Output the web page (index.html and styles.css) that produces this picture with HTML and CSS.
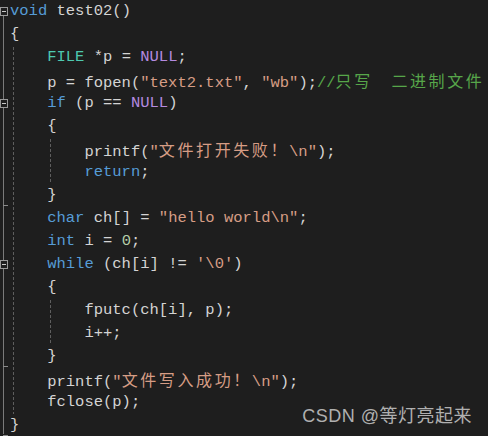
FILE: index.html
```html
<!DOCTYPE html>
<html lang="zh">
<head>
<meta charset="utf-8">
<title>test02</title>
<link rel="stylesheet" href="styles.css">
</head>
<body>
<div class="editor">
  <div class="gutter">
    <div class="g box"></div>
    <div class="g"></div>
    <div class="g"></div>
    <div class="g"></div>
    <div class="g box"></div>
    <div class="g"></div>
    <div class="g"></div>
    <div class="g"></div>
    <div class="g end"></div>
    <div class="g"></div>
    <div class="g"></div>
    <div class="g box"></div>
    <div class="g"></div>
    <div class="g"></div>
    <div class="g"></div>
    <div class="g end"></div>
    <div class="g"></div>
    <div class="g"></div>
    <div class="g end"></div>
  </div>
  <div class="code">
    <div class="ln"><span class="kw">void</span> test02()</div>
    <div class="ln">{</div>
    <div class="blk">
      <div class="ln"><span class="ty">FILE</span> *p = <span class="mc">NULL</span>;</div>
      <div class="ln">p = fopen(<span class="st">"text2.txt"</span>, <span class="st">"wb"</span>);<span class="cm">//<span class="cjk">只写</span>  <span class="cjk">二进制文件</span></span></div>
      <div class="ln"><span class="kw">if</span> (p == <span class="mc">NULL</span>)</div>
      <div class="ln">{</div>
      <div class="blk">
        <div class="ln">printf(<span class="st">"<span class="cjk">文件打开失败！</span>\n"</span>);</div>
        <div class="ln"><span class="kw">return</span>;</div>
      </div>
      <div class="ln">}</div>
      <div class="ln"><span class="kw">char</span> ch[] = <span class="st">"hello world\n"</span>;</div>
      <div class="ln"><span class="kw">int</span> i = <span class="nm">0</span>;</div>
      <div class="ln"><span class="kw">while</span> (ch[i] != <span class="st">'\0'</span>)</div>
      <div class="ln">{</div>
      <div class="blk">
        <div class="ln">fputc(ch[i], p);</div>
        <div class="ln">i++;</div>
      </div>
      <div class="ln">}</div>
      <div class="ln">printf(<span class="st">"<span class="cjk">文件写入成功！</span>\n"</span>);</div>
      <div class="ln">fclose(p);</div>
    </div>
    <div class="ln">}</div>
  </div>
  <div class="watermark">CSDN @等灯亮起来</div>
</div>
</body>
</html>
```
FILE: styles.css
```css
html, body {
  margin: 0;
  padding: 0;
  background: #1e1e1e;
}

.editor {
  position: relative;
  width: 488px;
  height: 436px;
  overflow: hidden;
  display: flex;
  background: #1e1e1e;
}

.gutter {
  position: relative;
  width: 9px;
  flex: none;
  display: flex;
  flex-direction: column;
}

.gutter::before {
  content: "";
  position: absolute;
  left: 3px;
  top: 12px;
  height: 422px;
  width: 1px;
  background: #7a7a7a;
}

.g {
  position: relative;
  height: 23px;
  flex: none;
}

.box::after {
  content: "";
  position: absolute;
  left: 0;
  top: 7px;
  width: 6px;
  height: 7px;
  border: 1px solid #9a9a9a;
  background: #1e1e1e linear-gradient(#c8c8c8, #c8c8c8) no-repeat center / 4px 1px;
}

.end::after {
  content: "";
  position: absolute;
  left: 3px;
  bottom: 1px;
  width: 5px;
  height: 1px;
  background: #8a8a8a;
}

.code {
  flex: 1;
  padding-left: 1px;
  font-family: "Liberation Mono", "Noto Sans CJK SC", monospace;
  font-size: 15.5px;
  color: #d4d4d4;
}

.ln {
  height: 23px;
  line-height: 23px;
  white-space: pre;
}

.blk {
  margin-left: 3px;
  padding-left: calc(4ch - 3px);
  background-image: linear-gradient(#5e5e5e 3px, transparent 3px);
  background-size: 1px 5px;
  background-repeat: repeat-y;
  background-position: 0 1px;
}

.cjk {
  font-family: "Noto Sans CJK SC", sans-serif;
  font-size: 16px;
  letter-spacing: 2.6px;
}

.kw { color: #569cd6; }
.ty { color: #4ec9b0; }
.mc { color: #b58ae0; }
.st { color: #d69d85; }
.cm { color: #57a64a; }
.nm { color: #b5cea8; }

.watermark {
  position: absolute;
  right: 16px;
  bottom: 9px;
  font-family: "Liberation Sans", "Noto Sans CJK SC", sans-serif;
  font-size: 18px;
  line-height: 22px;
  letter-spacing: 0.5px;
  color: #b0b0b0;
  white-space: nowrap;
}
```
